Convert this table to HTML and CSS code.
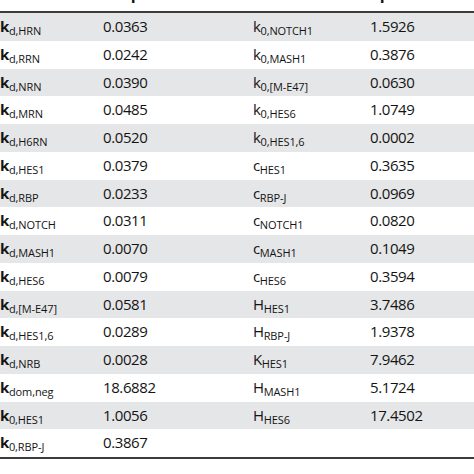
FILE: index.html
```html
<!DOCTYPE html>
<html>
<head>
<meta charset="utf-8">
<link rel="stylesheet" href="styles.css">
</head>
<body>
<table class="params">
<colgroup><col class="c1"><col class="c2"><col class="c3"><col class="c4"></colgroup>
<thead>
<tr><th>Parameter</th><th class="vh1">Optimal value</th><th>Parameter</th><th class="vh2">Optimal value</th></tr>
</thead>
<tbody>
<tr><td class="l"><b>k</b><sub>d,HRN</sub></td><td>0.0363</td><td>k<sub>0,NOTCH1</sub></td><td>1.5926</td></tr>
<tr><td class="l"><b>k</b><sub>d,RRN</sub></td><td>0.0242</td><td>k<sub>0,MASH1</sub></td><td>0.3876</td></tr>
<tr><td class="l"><b>k</b><sub>d,NRN</sub></td><td>0.0390</td><td>k<sub>0,[M-E47]</sub></td><td>0.0630</td></tr>
<tr><td class="l"><b>k</b><sub>d,MRN</sub></td><td>0.0485</td><td>k<sub>0,HES6</sub></td><td>1.0749</td></tr>
<tr><td class="l"><b>k</b><sub>d,H6RN</sub></td><td>0.0520</td><td>k<sub>0,HES1,6</sub></td><td>0.0002</td></tr>
<tr><td class="l"><b>k</b><sub>d,HES1</sub></td><td>0.0379</td><td>c<sub>HES1</sub></td><td>0.3635</td></tr>
<tr><td class="l"><b>k</b><sub>d,RBP</sub></td><td>0.0233</td><td>c<sub>RBP-J</sub></td><td>0.0969</td></tr>
<tr><td class="l"><b>k</b><sub>d,NOTCH</sub></td><td>0.0311</td><td>c<sub>NOTCH1</sub></td><td>0.0820</td></tr>
<tr><td class="l"><b>k</b><sub>d,MASH1</sub></td><td>0.0070</td><td>c<sub>MASH1</sub></td><td>0.1049</td></tr>
<tr><td class="l"><b>k</b><sub>d,HES6</sub></td><td>0.0079</td><td>c<sub>HES6</sub></td><td>0.3594</td></tr>
<tr><td class="l"><b>k</b><sub>d,[M-E47]</sub></td><td>0.0581</td><td>H<sub>HES1</sub></td><td>3.7486</td></tr>
<tr><td class="l"><b>k</b><sub>d,HES1,6</sub></td><td>0.0289</td><td>H<sub>RBP-J</sub></td><td>1.9378</td></tr>
<tr><td class="l"><b>k</b><sub>d,NRB</sub></td><td>0.0028</td><td>K<sub>HES1</sub></td><td>7.9462</td></tr>
<tr><td class="l"><b>k</b><sub>dom,neg</sub></td><td>18.6882</td><td>H<sub>MASH1</sub></td><td>5.1724</td></tr>
<tr><td class="l"><b>k</b><sub>0,HES1</sub></td><td>1.0056</td><td>H<sub>HES6</sub></td><td>17.4502</td></tr>
<tr><td class="l"><b>k</b><sub>0,RBP-J</sub></td><td>0.3867</td><td></td><td></td></tr>
</tbody>
</table>
</body>
</html>
```
FILE: styles.css
```css
html, body {
  margin: 0;
  padding: 0;
  background: #ffffff;
}
body {
  width: 474px;
  height: 474px;
  overflow: hidden;
  font-family: "Open Sans", "Noto Sans", sans-serif;
  color: #141414;
}
.params {
  width: 474px;
  border-collapse: collapse;
  table-layout: fixed;
  margin-top: -17px;
}
.c1 { width: 103px; }
.c2 { width: 150px; }
.c3 { width: 117px; }
.c4 { width: 104px; }
.params th {
  height: 28px;
  padding: 0;
  text-align: left;
  font-size: 16px;
  font-weight: 700;
  line-height: 20px;
  vertical-align: top;
  border-bottom: 2px solid #3c3c3c;
  white-space: nowrap;
  overflow: hidden;
}
.params th.vh1 { padding-left: 15px; }
.params th.vh2 { padding-left: 0; text-indent: -3px; }
.params td {
  height: 27.75px;
  padding: 0;
  font-size: 15px;
  line-height: 27.75px;
  letter-spacing: -0.4px;
  white-space: nowrap;
  vertical-align: top;
}
.params tbody tr:nth-child(odd) td {
  background: #e5e6e7;
}
.params tbody tr:last-child td {
  border-bottom: 2px solid #3c3c3c;
}
.params td b {
  font-weight: 700;
  font-size: 15px;
}
.params td.l {
  padding-left: 0;
}
.params sub {
  font-size: 11px;
  letter-spacing: -0.1px;
  vertical-align: -3px;
  line-height: 0;
}
```
